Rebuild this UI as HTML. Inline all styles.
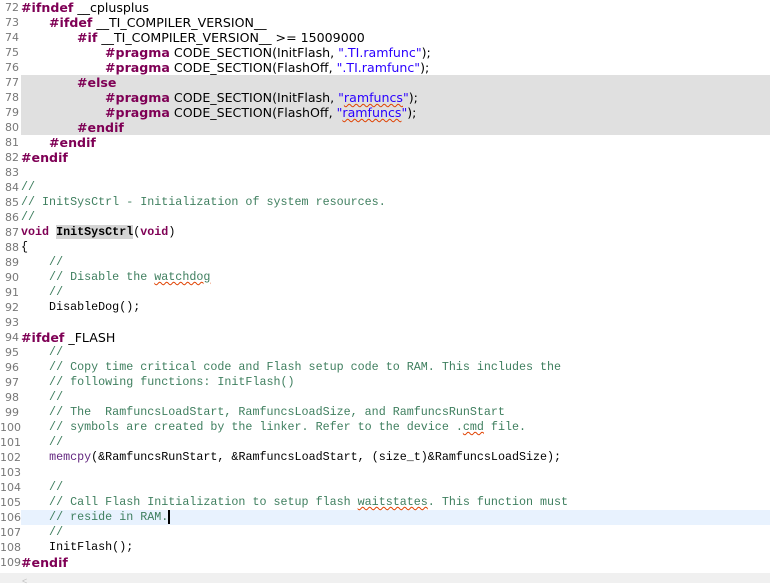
<!DOCTYPE html>
<html><head><meta charset="utf-8"><style>
body{margin:0;width:770px;height:583px;overflow:hidden;background:#fff;position:relative}
.l{position:absolute;left:0;width:770px;height:15px;line-height:15px;white-space:pre;font-family:"Liberation Mono",monospace;font-size:11.7px;color:#000}
.n{position:absolute;left:0;width:19px;text-align:right;font-family:"DejaVu Sans",sans-serif;font-size:11px;color:#787878}
.c{position:absolute;left:21px;top:0}
.p{font-family:"DejaVu Sans",sans-serif;font-size:12.6px}
.k{color:#7f0055;font-weight:bold}
.g{color:#3f7f5f}
.s{color:#2a00ff}
.f{color:#642880}
.sq{text-decoration:underline wavy #e04000;text-decoration-thickness:1px}
</style></head><body>
<div style="position:absolute;left:21px;top:75px;width:749px;height:60px;background:#e0e0e0"></div>
<div style="position:absolute;left:21px;top:510px;width:749px;height:15px;background:#e8f2fe"></div>
<div style="position:absolute;left:0;top:573px;width:770px;height:10px;background:#f0f0f0"></div>
<div style="position:absolute;left:22px;top:576px;color:#c0c0c0;font:9px 'Liberation Sans',sans-serif">&lt;</div>

<div class="l" style="top:0"><span class="n">72</span><span class="c p"><span class="k">#ifndef</span> __cplusplus</span></div>
<div class="l" style="top:15px"><span class="n">73</span><span class="c p" style="left:49px"><span class="k">#ifdef</span> __TI_COMPILER_VERSION__</span></div>
<div class="l" style="top:30px"><span class="n">74</span><span class="c p" style="left:77px"><span class="k">#if</span> __TI_COMPILER_VERSION__ &gt;= 15009000</span></div>
<div class="l" style="top:45px"><span class="n">75</span><span class="c p" style="left:105px"><span class="k">#pragma</span> CODE_SECTION(InitFlash, <span class="s">".TI.ramfunc"</span>);</span></div>
<div class="l" style="top:60px"><span class="n">76</span><span class="c p" style="left:105px"><span class="k">#pragma</span> CODE_SECTION(FlashOff, <span class="s">".TI.ramfunc"</span>);</span></div>
<div class="l" style="top:75px"><span class="n">77</span><span class="c p" style="left:77px"><span class="k">#else</span></span></div>
<div class="l" style="top:90px"><span class="n">78</span><span class="c p" style="left:105px"><span class="k">#pragma</span> CODE_SECTION(InitFlash, <span class="s">"<span class="sq">ramfuncs</span>"</span>);</span></div>
<div class="l" style="top:105px"><span class="n">79</span><span class="c p" style="left:105px"><span class="k">#pragma</span> CODE_SECTION(FlashOff, <span class="s">"<span class="sq">ramfuncs</span>"</span>);</span></div>
<div class="l" style="top:120px"><span class="n">80</span><span class="c p" style="left:77px"><span class="k">#endif</span></span></div>
<div class="l" style="top:135px"><span class="n">81</span><span class="c p" style="left:49px"><span class="k">#endif</span></span></div>
<div class="l" style="top:150px"><span class="n">82</span><span class="c p"><span class="k">#endif</span></span></div>
<div class="l" style="top:165px"><span class="n">83</span></div>
<div class="l" style="top:180px"><span class="n">84</span><span class="c g">//</span></div>
<div class="l" style="top:195px"><span class="n">85</span><span class="c g">// InitSysCtrl - Initialization of system resources.</span></div>
<div class="l" style="top:210px"><span class="n">86</span><span class="c g">//</span></div>
<div class="l" style="top:225px"><span class="n">87</span><span class="c"><span class="k">void</span> <b style="background:#d4d4d4">InitSysCtrl</b>(<span class="k">void</span>)</span></div>
<div class="l" style="top:240px"><span class="n">88</span><span class="c">{</span></div>
<div class="l" style="top:255px"><span class="n">89</span><span class="c g">    //</span></div>
<div class="l" style="top:270px"><span class="n">90</span><span class="c g">    // Disable the <span class="sq">watchdog</span></span></div>
<div class="l" style="top:285px"><span class="n">91</span><span class="c g">    //</span></div>
<div class="l" style="top:300px"><span class="n">92</span><span class="c">    DisableDog();</span></div>
<div class="l" style="top:315px"><span class="n">93</span></div>
<div class="l" style="top:330px"><span class="n">94</span><span class="c p"><span class="k">#ifdef</span> _FLASH</span></div>
<div class="l" style="top:345px"><span class="n">95</span><span class="c g">    //</span></div>
<div class="l" style="top:360px"><span class="n">96</span><span class="c g">    // Copy time critical code and Flash setup code to RAM. This includes the</span></div>
<div class="l" style="top:375px"><span class="n">97</span><span class="c g">    // following functions: InitFlash()</span></div>
<div class="l" style="top:390px"><span class="n">98</span><span class="c g">    //</span></div>
<div class="l" style="top:405px"><span class="n">99</span><span class="c g">    // The  RamfuncsLoadStart, RamfuncsLoadSize, and RamfuncsRunStart</span></div>
<div class="l" style="top:420px"><span class="n">100</span><span class="c g">    // symbols are created by the linker. Refer to the device .<span class="sq">cmd</span> file.</span></div>
<div class="l" style="top:435px"><span class="n">101</span><span class="c g">    //</span></div>
<div class="l" style="top:450px"><span class="n">102</span><span class="c">    <span class="f">memcpy</span>(&amp;RamfuncsRunStart, &amp;RamfuncsLoadStart, (size_t)&amp;RamfuncsLoadSize);</span></div>
<div class="l" style="top:465px"><span class="n">103</span></div>
<div class="l" style="top:480px"><span class="n">104</span><span class="c g">    //</span></div>
<div class="l" style="top:495px"><span class="n">105</span><span class="c g">    // Call Flash Initialization to setup flash <span class="sq">waitstates</span>. This function must</span></div>
<div class="l" style="top:510px"><span class="n">106</span><span class="c g">    // reside in RAM.<span style="border-left:2px solid #000"></span></span></div>
<div class="l" style="top:525px"><span class="n">107</span><span class="c g">    //</span></div>
<div class="l" style="top:540px"><span class="n">108</span><span class="c">    InitFlash();</span></div>
<div class="l" style="top:555px"><span class="n">109</span><span class="c p"><span class="k">#endif</span></span></div>
</body></html>
